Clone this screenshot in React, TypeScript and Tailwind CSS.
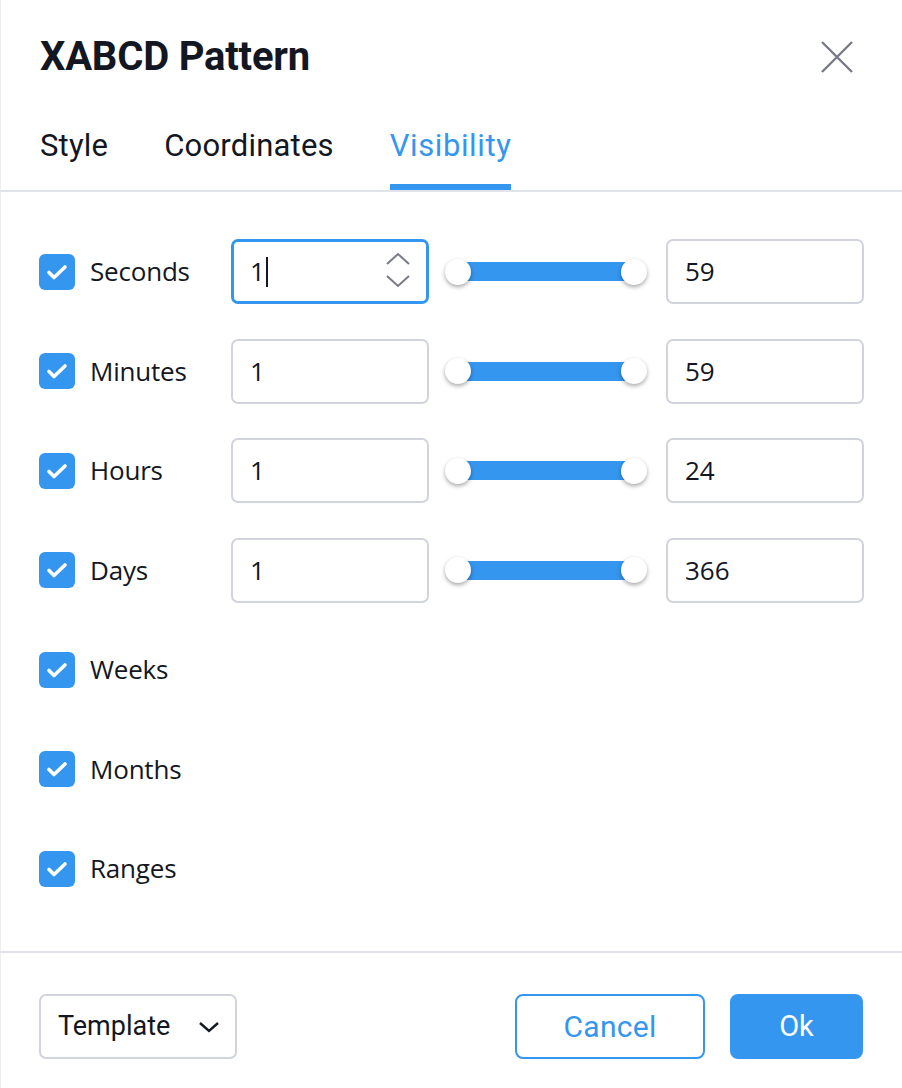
import { useState } from "react";

const rows = [
  { label: "Seconds", from: "1", to: "59", focused: true },
  { label: "Minutes", from: "1", to: "59" },
  { label: "Hours", from: "1", to: "24" },
  { label: "Days", from: "1", to: "366" },
  { label: "Weeks" },
  { label: "Months" },
  { label: "Ranges" },
];

const Check = () => (
  <span className="flex h-[36px] w-[36px] shrink-0 items-center justify-center rounded-[6px] bg-[#3596ef]">
    <svg width="22" height="18" viewBox="0 0 22 18" fill="none">
      <path d="M3 9.5l5 5L19 4" stroke="white" strokeWidth="3.6" strokeLinecap="round" strokeLinejoin="round" />
    </svg>
  </span>
);

const NumberBox = ({ value, focused }: { value: string; focused?: boolean }) => (
  <div
    className={
      focused
        ? "relative flex h-[65px] w-[198px] shrink-0 items-center rounded-[7px] border-[3px] border-[#3596ef] pl-[16px] text-[26px] text-[#131722]"
        : "relative flex h-[65px] w-[198px] shrink-0 items-center rounded-[7px] border-2 border-[#d1d4dc] pl-[17px] text-[26px] text-[#131722]"
    }
  >
    <span>{value}</span>
    {focused && (
      <>
        <span className="ml-[1px] h-[30px] w-[2px] bg-[#131722]" />
        <span className="absolute right-[15px] top-[10px] flex flex-col gap-[8px]">
          <svg width="26" height="14" viewBox="0 0 26 14" fill="none">
            <path d="M2 12L13 2l11 10" stroke="#787b86" strokeWidth="2" />
          </svg>
          <svg width="26" height="14" viewBox="0 0 26 14" fill="none">
            <path d="M2 2l11 10L24 2" stroke="#787b86" strokeWidth="2" />
          </svg>
        </span>
      </>
    )}
  </div>
);

const RangeSlider = () => (
  <div className="flex w-[237px] shrink-0 items-center pl-[16px] pr-[19px]">
    <div className="relative flex h-[26px] w-full items-center">
      <div className="mx-[12px] h-[19px] w-full bg-[#3596ef]" />
      <span className="absolute left-0 top-0 h-[26px] w-[26px] rounded-full bg-white shadow-[0_2px_4px_rgba(0,0,0,0.35)]" />
      <span className="absolute right-0 top-0 h-[26px] w-[26px] rounded-full bg-white shadow-[0_2px_4px_rgba(0,0,0,0.35)]" />
    </div>
  </div>
);

export default function App() {
  const [tab] = useState("Visibility");

  return (
    <div className="flex h-[1088px] w-[902px] flex-col bg-white font-['Roboto',sans-serif] text-[#131722] shadow-[inset_1px_0_0_#eceef2]">
      <div className="flex h-[110px] items-center justify-between pl-[40px] pr-[48px] pt-[4px]">
        <h1 className="text-[40px] font-bold leading-none tracking-[-0.2px]">XABCD Pattern</h1>
        <svg width="34" height="34" viewBox="0 0 34 34" fill="none">
          <path d="M2 2l30 30M32 2L2 32" stroke="#787b86" strokeWidth="2.4" />
        </svg>
      </div>

      <div className="flex h-[82px] gap-[56px] border-b-2 border-[#e0e3eb] px-[40px]">
        {["Style", "Coordinates", "Visibility"].map((t) => (
          <div
            key={t}
            className={
              t === tab
                ? "flex items-center border-b-[6px] border-[#3596ef] pb-[2px] text-[31px] tracking-[0.6px] text-[#3596ef]"
                : "flex items-center border-b-[6px] border-transparent pb-[2px] text-[31px] tracking-[0.2px]"
            }
          >
            {t}
          </div>
        ))}
      </div>

      <div className="flex flex-col gap-[34.5px] px-[39px] pb-[50px] pt-[47px] font-['Open_Sans',sans-serif]">
        {rows.map((r) => (
          <div key={r.label} className="flex h-[65px] items-center">
            <div className="flex w-[192px] shrink-0 items-center gap-[15px]">
              <Check />
              <span className="text-[26px] tracking-[-0.2px]">{r.label}</span>
            </div>
            {r.from && (
              <>
                <NumberBox value={r.from} focused={r.focused} />
                <RangeSlider />
                <NumberBox value={r.to!} />
              </>
            )}
          </div>
        ))}
      </div>

      <div className="flex items-center justify-between border-t-2 border-[#e0e3eb] px-[39px] pt-[41px]">
        <button className="flex h-[65px] w-[198px] items-center justify-between rounded-[7px] border-2 border-[#d1d4dc] pl-[17px] pr-[15px] text-[27px]">
          Template
          <svg width="22" height="14" viewBox="0 0 22 14" fill="none">
            <path d="M2 3l9 8 9-8" stroke="#131722" strokeWidth="2.4" />
          </svg>
        </button>
        <div className="flex gap-[25px]">
          <button className="h-[65px] w-[190px] rounded-[8px] border-2 border-[#3596ef] text-[30px] tracking-[0.3px] text-[#3596ef]">
            Cancel
          </button>
          <button className="h-[65px] w-[133px] rounded-[8px] bg-[#3596ef] text-[29px] text-white">Ok</button>
        </div>
      </div>
    </div>
  );
}
